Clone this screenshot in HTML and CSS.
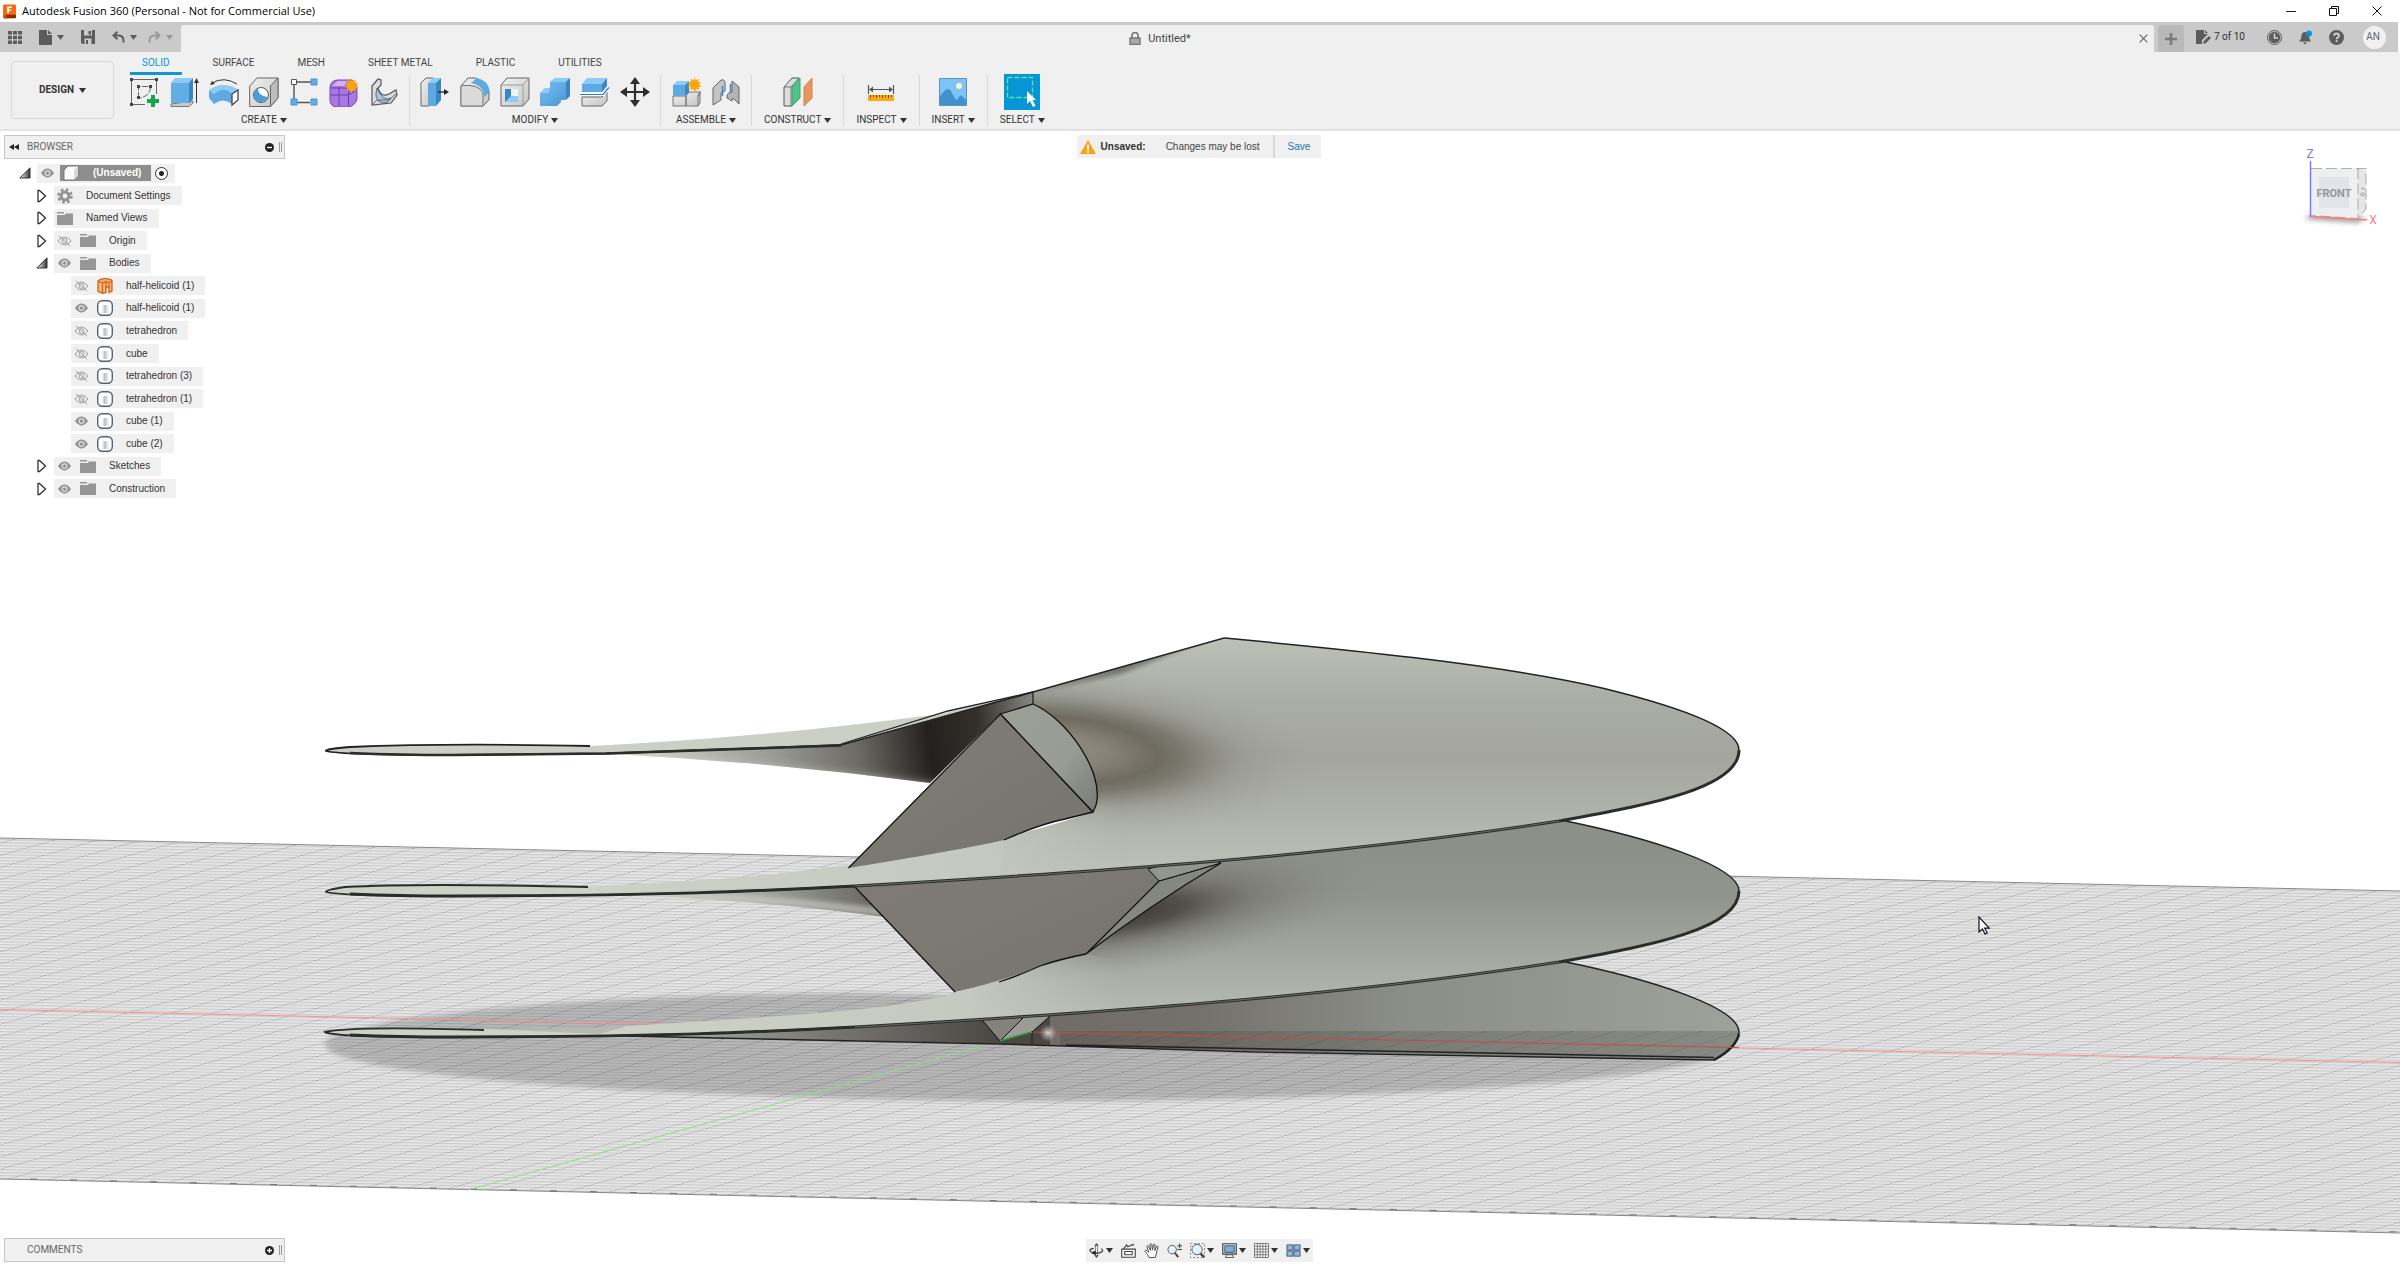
FILE: index.html
```html
<!DOCTYPE html>
<html lang="en">
<head>
<meta charset="utf-8">
<title>Autodesk Fusion 360 (Personal - Not for Commercial Use)</title>
<link rel="stylesheet" href="styles.css">
</head>
<body>
<svg class="defs" aria-hidden="true">
  <defs>
    <linearGradient id="gblue" x1="0" y1="0" x2="1" y2="1"><stop offset="0" stop-color="#7cc3f5"/><stop offset="1" stop-color="#4593cf"/></linearGradient>
    <linearGradient id="ggray" x1="0" y1="0" x2="1" y2="1"><stop offset="0" stop-color="#f2f2f2"/><stop offset="1" stop-color="#c4c4c4"/></linearGradient>
    <linearGradient id="gbody" x1="0" y1="0" x2="1" y2="0"><stop offset="0" stop-color="#fff"/><stop offset=".4" stop-color="#b9bdca"/><stop offset="1" stop-color="#fff"/></linearGradient>
    <linearGradient id="gtri" x1="0" y1="0" x2="1" y2="0"><stop offset="0" stop-color="#fff"/><stop offset="1" stop-color="#333"/></linearGradient>
    <symbol id="caret" viewBox="0 0 7 6"><path d="M0 1h7L3.5 6z" fill="currentColor"/></symbol>
    <symbol id="eye" viewBox="0 0 16 12"><path d="M1 6Q8-3.500 15 6Q8 15.500 1 6z" fill="#949494"/><circle cx="8" cy="6" r="3" fill="#f0f0f0"/><circle cx="8" cy="6" r="2" fill="#949494"/></symbol>
    <symbol id="eyeoff" viewBox="0 0 16 12"><g fill="none" stroke="#999"><path d="M1 6Q8-2.500 15 6Q8 14.500 1 6z"/><circle cx="8" cy="6" r="2.600"/><path d="M2 .5L14 11.500"/></g></symbol>
    <symbol id="folder" viewBox="0 0 16 13"><path d="M0 0h7v1.500H0zM0 3h7.500L9 1.500h7V13H0z" fill="#969696"/></symbol>
    <symbol id="closed" viewBox="0 0 10 14"><path d="M1 1.500h1.500L8.500 7l-6 5.500H1z" fill="#fff" stroke="#333" stroke-width="1.300"/></symbol>
    <symbol id="open" viewBox="0 0 12 12"><path d="M11 .8V11H.8z" fill="url(#gtri)" stroke="#333"/></symbol>
    <symbol id="body" viewBox="0 0 16 16"><rect x=".7" y=".7" width="14.600" height="14.600" rx="4.500" fill="#fff" stroke="#5a6070" stroke-width="1.400"/><path d="M5 5h7v8H5z" fill="url(#gbody)"/></symbol>
    <symbol id="surf" viewBox="0 0 16 16"><path d="M1 3q2-2 6-2.300Q13 .5 15 2.500V13l-3 1.500V9H9v5.500l-3 .8L1 13.500z" fill="#f9b27a" stroke="#cf6412" stroke-width="1.300"/><path d="M1.500 3.500L5.500 5v10M5.500 5L9 3.700V9M12 9V4.500L15 3M9 3.700l3 .8" fill="none" stroke="#cf6412" stroke-width="1.200"/></symbol>
    <symbol id="gear" viewBox="0 0 16 16"><circle cx="8" cy="8" r="6.300" fill="none" stroke="#949494" stroke-width="3" stroke-dasharray="2.600 2.348"/><circle cx="8" cy="8" r="3.900" fill="none" stroke="#949494" stroke-width="3"/></symbol>
    <symbol id="star" viewBox="0 0 16 16"><path d="M8 0l1.400 3.700L12.500 1.500l-.7 3.800 3.700.2-2.900 2.500L16 10l-3.800.6 1.300 3.500-3.400-1.700L8 16l-1.500-3.600-3.600 1.600 1-3.500L0 9.500 3.400 8 .7 5.200l3.700.1L4 1.500l3 2.200z" fill="#fca50a"/></symbol>
  </defs>
</svg>

<header class="titlebar">
  <svg class="logo" viewBox="0 0 14 15"><rect width="14" height="15" rx="1.500" fill="#f56b12"/><path d="M4.500 2h5v1.600H6.400v1.700H9v1.500H6.400V9.500H4.500z" fill="#fff"/><path d="M3 11h11v3.500H2z" fill="#8c2c00"/><path d="M1 11h3v4H1z" fill="#d04a00"/></svg>
  <h1>Autodesk Fusion 360 (Personal - Not for Commercial Use)</h1>
  <div class="window-buttons">
    <button aria-label="Minimize"><svg viewBox="0 0 10 10"><path d="M0 5.500h10" stroke="#222"/></svg></button>
    <button aria-label="Restore"><svg viewBox="0 0 10 10"><path d="M.5 2.500h7v7h-7zM2.500 2V.5h7v7H8" fill="none" stroke="#111"/></svg></button>
    <button aria-label="Close"><svg viewBox="0 0 10 10"><path d="M.5 .5l9 9M9.500 .5l-9 9" stroke="#111"/></svg></button>
  </div>
</header>

<div class="tabbar">
  <div class="quick">
    <button aria-label="Data panel"><svg width="14" height="13" viewBox="0 0 14 13" fill="#5c5c5c"><path d="M0 0h4v3.500H0zM5 0h4v3.500H5zM10 0h4v3.500h-4zM0 4.700h4v3.500H0zM5 4.700h4v3.500H5zM10 4.700h4v3.500h-4zM0 9.400h4v3.500H0zM5 9.400h4v3.500H5zM10 9.400h4v3.500h-4z"/></svg></button>
    <button aria-label="File"><svg width="13" height="15" viewBox="0 0 13 15"><path d="M0 0h8v5h5v10H0zM9 0l4 4H9z" fill="#5c5c5c"/></svg><svg class="caret"><use href="#caret"/></svg></button>
    <button aria-label="Save"><svg width="14" height="14" viewBox="0 0 14 14"><path d="M0 0h14v14H1.500L0 12.500z" fill="#5c5c5c"/><path d="M3 0h8v5.500H3zM3.500 8.500h7V14h-7z" fill="#cacaca"/><path d="M7.500 1H10v3.500H7.500zM5 10h2v4H5z" fill="#5c5c5c"/></svg></button>
    <div class="history">
      <button aria-label="Undo"><svg width="13" height="12" viewBox="0 0 13 12"><path d="M5.500 .8L1.500 4.500l4 3.700M2 4.500h5.500Q12 5 11.500 11.500" fill="none" stroke="#5c5c5c" stroke-width="2"/></svg><svg class="caret"><use href="#caret"/></svg></button>
      <button class="off" aria-label="Redo"><svg width="13" height="12" viewBox="0 0 13 12"><path d="M7.500 .8l4 3.700-4 3.700M11 4.500H5.500Q1 5 1.500 11.500" fill="none" stroke="#999" stroke-width="2"/></svg><svg class="caret"><use href="#caret"/></svg></button>
    </div>
  </div>
  <div class="doc-tab">
    <div class="doc-name"><svg width="12" height="13" viewBox="0 0 12 13"><path d="M3 6V3.500a3 3 0 0 1 6 0V6" fill="none" stroke="#777" stroke-width="1.700"/><path d="M1 6h10v6.500H1z" fill="#a9a9a9" stroke="#777" stroke-width="1.400"/></svg><span>Untitled*</span></div>
    <button aria-label="Close document"><svg width="9" height="9" viewBox="0 0 9 9"><path d="M.7 .7l7.600 7.600M8.300 .7L.7 8.300" stroke="#666" stroke-width="1.200"/></svg></button>
  </div>
  <button class="new-tab" aria-label="New document"><svg width="12" height="12" viewBox="0 0 12 12"><path d="M6 0v12M0 6h12" stroke="#7a7a7a" stroke-width="2.600"/></svg></button>
  <div class="account">
    <button class="count"><svg width="15" height="16" viewBox="0 0 15 16"><path d="M0 1h8v4h4l-6 6v4H0zM9 1l3 3H9z" fill="#5c5c5c"/><path d="M7 15l.8-3L13 7l2 2-5 5z" fill="#5c5c5c"/></svg><span>7 of 10</span></button>
    <button aria-label="Job status"><svg width="15" height="15" viewBox="0 0 15 15"><circle cx="7.500" cy="7.500" r="7" fill="#cacaca" stroke="#5c5c5c"/><circle cx="7.500" cy="7.500" r="5.700" fill="#5c5c5c"/><path d="M7.500 3.500v4.500H11" fill="none" stroke="#d5d5d5" stroke-width="1.500"/></svg></button>
    <button aria-label="Notifications"><svg width="15" height="15" viewBox="0 0 15 15"><path d="M1 11.500Q3.500 9 3.500 5.500 4 2 7 2q3.500 0 4 3.500Q11 9 13 11.500zM5 12.500h4Q7 16 5 12.500z" fill="#5c5c5c"/><circle cx="11" cy="3.500" r="3" fill="#0696d7"/></svg></button>
    <button aria-label="Help"><svg width="15" height="15" viewBox="0 0 15 15"><circle cx="7.500" cy="7.500" r="7.500" fill="#5c5c5c"/><path d="M5 5.700Q5.200 3.500 7.500 3.500T10 5.700Q10 6.800 8.500 7.600 7.600 8.100 7.600 9.200M7.600 10.300v1.700" fill="none" stroke="#d5d5d5" stroke-width="1.800"/></svg></button>
    <button class="avatar">AN</button>
  </div>
</div>

<div class="toolbar">
  <button class="workspace">DESIGN<svg class="caret"><use href="#caret"/></svg></button>
  <div class="ribbon">
    <nav class="tabs">
      <a href="#solid" class="on">SOLID</a><a href="#surface">SURFACE</a><a href="#mesh">MESH</a><a href="#sheet">SHEET METAL</a><a href="#plastic">PLASTIC</a><a href="#utilities">UTILITIES</a>
    </nav>
    <div class="groups">
      <section class="group multi">
        <div class="icons">
          <button aria-label="Create sketch"><svg viewBox="0 0 30 30"><path d="M2.500 2v26M27.500 2v15M3 2.500h25M2 27.500h14" fill="none" stroke="#666"/><path d="M1 1h3v3H1zM26 1h3v3h-3zM1 26h3v3H1z" fill="#444"/><path d="M9.500 21V9.500H22M21.500 10q0 9-11 11" fill="none" stroke="#666" stroke-dasharray="6 1.500"/><path d="M8 8h3v3H8zM20 8h3v3h-3zM8 19h3v3H8z" fill="#444"/><path d="M24 18v12M18 24h12" stroke="#16a54a" stroke-width="4"/></svg></button>
          <button aria-label="Extrude"><svg viewBox="0 0 30 30"><path d="M2 27v2.500h18L24 26v-2z" fill="#c9c9c9" stroke="#777"/><path d="M2 5.500L6 1h18l-4 4.500z" fill="#8bcbf8"/><path d="M2 5.500h18V26H2z" fill="#62ade6"/><path d="M20 5.500L24 1v21l-4 4.500z" fill="#3c86be"/><path d="M27.500 26V4" stroke="#333"/><path d="M25 6l2.500-5L30 6z" fill="#333"/></svg></button>
          <button aria-label="Revolve"><svg viewBox="0 0 30 30"><path d="M3 6Q15 -1 28 7" fill="none" stroke="#333"/><path d="M1 8l2-4 3 3z" fill="#333"/><path d="M0 13Q14 3 30 13L25 17Q14 9 5 17z" fill="#8bcbf8"/><path d="M0 13v8l5 6q9-7 18 0V16Q14 9 5 17z" fill="#5fa9e2"/><path d="M23 17l6-4v10l-6 5z" fill="#fff" stroke="#444" stroke-width="1.300"/></svg></button>
          <button aria-label="Hole"><svg viewBox="0 0 30 30"><path d="M.7 9L8 1h21v20l-7.500 8.500H.7z" fill="url(#ggray)" stroke="#666"/><path d="M21.500 9L29 1v20l-7.500 8.500z" fill="#bdbdbd" stroke="#666"/><circle cx="12" cy="18" r="7.500" fill="#fff" stroke="#555"/><path d="M9 11.500Q9 19 18.500 20A7 7 0 1 1 9 11.500z" fill="#4a9dd8"/></svg></button>
          <button aria-label="Pattern"><svg viewBox="0 0 30 30"><path d="M5 5h20M5 5v20M7 25.500h14" stroke="#555" stroke-width="1.400"/><path d="M2.500 2.500h5v5h-5z" fill="#fff" stroke="#555"/><path d="M22 2h6v6h-6zM2 22h6v6H2zM22 22h6v6h-6z" fill="#62ade6" stroke="#4593cf"/></svg></button>
          <button aria-label="Create form"><svg viewBox="0 0 30 30"><path d="M1 10Q2 3 9 3l14 0q5 3 5 10v9q-2 7-9 8H7q-6-1-6-7z" fill="#a878e0" stroke="#7a48b8"/><path d="M1.500 18H19l9-5M10 10v19M1.500 11h16q2 0 2 3v15M19 11l5-6" fill="none" stroke="#7038b0"/><path d="M3 9l6-5h9l-3 5z" fill="#d2b4f6"/><use href="#star" x="15" y="1" width="15" height="15"/></svg></button>
          <button aria-label="Derive"><svg viewBox="0 0 30 30"><path d="M3 28V9l6-7 3 1v5l-3 3q3 10 11 6l7-4 1 5-6 8z" fill="#ddd" stroke="#555" stroke-width="1.200"/><path d="M8 11Q4 24 14 26q6 0 8-5-8 4-14-10z" fill="#a9c3e0" stroke="#456" stroke-width=".8"/><path d="M3 28l5-5h12l8-7" fill="none" stroke="#666"/></svg></button>
        </div>
        <button class="label">CREATE<svg class="caret"><use href="#caret"/></svg></button>
      </section>
      <section class="group multi">
        <div class="icons">
          <button aria-label="Press pull"><svg viewBox="0 0 30 30"><path d="M1 6l5-5h7v22l-4 6H1z" fill="url(#ggray)" stroke="#666"/><path d="M8 6h8v23H8z" fill="#5fa9e2"/><path d="M8 6l5-5h8l-5 5z" fill="#8bcbf8"/><path d="M16 6l5-5v22l-5 6z" fill="#3c86be"/><path d="M18 15h8" stroke="#222" stroke-width="1.300"/><path d="M24 12l5 3-5 3z" fill="#222"/></svg></button>
          <button aria-label="Fillet"><svg viewBox="0 0 30 30"><path d="M1 9l7-8h8L29 15v8l-6 6H1z" fill="url(#ggray)" stroke="#666"/><path d="M11 6l6-5Q28 3 30 15l-6 5Q24 8 11 6z" fill="#5fa9e2"/><path d="M1 8.500h9Q24 10 23 20v9H1z" fill="#dadada" stroke="#777"/></svg></button>
          <button aria-label="Shell"><svg viewBox="0 0 30 30"><path d="M1 8l6-7h22v21l-6 7H1z" fill="url(#ggray)" stroke="#666"/><path d="M1 8h22v21M23 8l6-7" fill="none" stroke="#999"/><path d="M5 12h13v13H5z" fill="#3c86be"/><path d="M11 19h7v6H5z" fill="#8bcbf8"/><path d="M11 12h7v7h-7z" fill="#f2f2f2"/></svg></button>
          <button aria-label="Combine"><svg viewBox="0 0 30 30"><path d="M0 16l5-5h5V5l5-4h15v18l-5 4h-4v2l-4 4H0z" fill="url(#gblue)"/><path d="M0 16l5-5h5L9 15l-1 1zM10 5l5-4h15l-4 4z" fill="#8bcbf8"/><path d="M26 5l4-4v18l-4 4z" fill="#3c86be"/></svg></button>
          <button aria-label="Split body"><svg viewBox="0 0 30 30"><path d="M2 20h20l5-5v9l-5 5H2z" fill="url(#ggray)" stroke="#666"/><path d="M2 7l5-6h20l-5 6z" fill="#8bcbf8"/><path d="M2 7h20v8H2z" fill="#5fa9e2"/><path d="M22 7l5-6v8l-5 6z" fill="#3c86be"/><path d="M0 17.500h23l6-7" fill="none" stroke="#fff" stroke-width="3"/><path d="M0 17.500h23l6-7" fill="none" stroke="#1a7fd0" stroke-width="1.200"/></svg></button>
          <button aria-label="Move"><svg viewBox="0 0 30 30"><path d="M15 5v20M5 15h20" stroke="#2e2e2e" stroke-width="2.200"/><path d="M15 0l5 7H10zM15 30l5-7H10zM0 15l7-5v10zM30 15l-7-5v10z" fill="#2e2e2e"/></svg></button>
        </div>
        <button class="label">MODIFY<svg class="caret"><use href="#caret"/></svg></button>
      </section>
      <section class="group multi">
        <div class="icons">
          <button aria-label="New component"><svg viewBox="0 0 30 30"><path d="M2 19h13v10H2zM15 19l3-4h12l-3 4v10H15zM27 19l2-4v11l-2 3" fill="url(#ggray)" stroke="#777"/><path d="M2 8h12v11H2z" fill="#5fa9e2"/><path d="M2 8l4-4h12l-4 4z" fill="#8bcbf8"/><path d="M14 8l4-4v11l-4 4z" fill="#3c86be"/><use href="#star" x="16" y="0" width="15" height="15"/></svg></button>
          <button aria-label="Joint"><svg viewBox="0 0 30 30"><path d="M2 11L10 3q4-1 4 3v8l-4 2v7l-8 5z" fill="#c4c4c4" stroke="#666"/><path d="M28 10l-7-6v11h-2q-4 2-3 6l5 3 1-3 6 6z" fill="#b4b4b4" stroke="#666"/><path d="M11.500 9v10M19.500 7v9" stroke="#2a8ad4" stroke-width="1.500"/></svg></button>
        </div>
        <button class="label">ASSEMBLE<svg class="caret"><use href="#caret"/></svg></button>
      </section>
      <section class="group">
        <div class="icons"><button aria-label="Offset plane"><svg viewBox="0 0 30 30"><path d="M1 10l8-9h7v20l-7 8H1z" fill="#ddd" stroke="#555"/><path d="M1 10h7v19M8 10l8-9" fill="none" stroke="#777"/><path d="M9 10l8-9v20l-8 8z" fill="#52c184" stroke="#3ba86c"/><path d="M21 10l8-9v20l-8 8z" fill="#e8965f" stroke="#d5834c"/></svg></button></div>
        <button class="label">CONSTRUCT<svg class="caret"><use href="#caret"/></svg></button>
      </section>
      <section class="group">
        <div class="icons"><button aria-label="Measure"><svg viewBox="0 0 30 30"><path d="M2.500 8v9M27.500 8v9M4 12.500h22" stroke="#555" stroke-width="1.200"/><path d="M3 12.500l4-3v6zM27 12.500l-4-3v6z" fill="#555"/><path d="M2 18h26v6H2z" fill="#fba914"/><path d="M4.500 18v3M7.500 18v2M10.500 18v3M13.500 18v2M16.500 18v3M19.500 18v2M22.500 18v3M25.500 18v2" stroke="#744b00"/></svg></button></div>
        <button class="label">INSPECT<svg class="caret"><use href="#caret"/></svg></button>
      </section>
      <section class="group">
        <div class="icons"><button aria-label="Insert image"><svg viewBox="0 0 30 30"><path d="M1.500 1.500h27v27h-27z" fill="#7cc3f7" stroke="#5b94bd"/><circle cx="21" cy="9" r="3" fill="#fdf6c8"/><path d="M2 20q7-12 11-6 3 7 6 9 3-6 5-4l4 4v5H2z" fill="#3f93cc"/></svg></button></div>
        <button class="label">INSERT<svg class="caret"><use href="#caret"/></svg></button>
      </section>
      <section class="group">
        <div class="icons"><button class="picked" aria-label="Select"><svg viewBox="0 0 36 36"><path d="M3.500 3.500h25v20h-25z" fill="none" stroke="#5fe39a" stroke-width="1.300" stroke-dasharray="5 2"/><path d="M23 17v13l3-3 3 6 2.500-1.200-3-5.800H32z" fill="#fff"/></svg></button></div>
        <button class="label">SELECT<svg class="caret"><use href="#caret"/></svg></button>
      </section>
    </div>
  </div>
</div>

<main class="viewport">
  <svg class="scene" viewBox="0 131 2400 1135" preserveAspectRatio="xMidYMid slice" role="img" aria-label="Helicoid model">
    <defs>
      <pattern id="rows" width="40" height="3" patternUnits="userSpaceOnUse" patternTransform="matrix(1 .0221 0 1 0 838)"><rect width="40" height="3" fill="#e8e8e8"/><rect y="1" width="40" height="1.300" fill="#cbcbcb"/></pattern>
      <pattern id="cols" width="40" height="40" patternUnits="userSpaceOnUse" patternTransform="matrix(1 .0221 -3.576 1 16 838.400)"><rect width="3" height="40" fill="#000" opacity=".13"/></pattern>
      <linearGradient id="top" x1="0" y1="640" x2="0" y2="870" gradientUnits="userSpaceOnUse"><stop offset="0" stop-color="#bdc0b7"/><stop offset=".25" stop-color="#abaea6"/><stop offset=".5" stop-color="#a4a69e"/><stop offset=".75" stop-color="#afb2aa"/><stop offset="1" stop-color="#bcc0b7"/></linearGradient>
      <linearGradient id="mid" x1="0" y1="850" x2="0" y2="1010" gradientUnits="userSpaceOnUse"><stop offset="0" stop-color="#8d8f89"/><stop offset=".3" stop-color="#92958e"/><stop offset=".65" stop-color="#a3a79f"/><stop offset="1" stop-color="#b5bab1"/></linearGradient>
      <linearGradient id="low" x1="1060" y1="0" x2="1739" y2="0" gradientUnits="userSpaceOnUse"><stop offset="0" stop-color="#716d66"/><stop offset=".2" stop-color="#74716b"/><stop offset=".5" stop-color="#8b8d87"/><stop offset="1" stop-color="#9ea29a"/></linearGradient>
      <linearGradient id="wing" x1="600" y1="0" x2="1120" y2="0" gradientUnits="userSpaceOnUse"><stop offset="0" stop-color="#cdd1c8"/><stop offset=".7" stop-color="#c5c9c0"/><stop offset="1" stop-color="#c0c4bb" stop-opacity="0"/></linearGradient>
      <radialGradient id="ring" gradientUnits="userSpaceOnUse" cx="0" cy="0" r="1" gradientTransform="matrix(270 22 -20 82 1050 750)"><stop offset="0" stop-color="#938d7e"/><stop offset=".2" stop-color="#88847a"/><stop offset=".4" stop-color="#6f6b60"/><stop offset=".5" stop-color="#747167" stop-opacity=".85"/><stop offset=".72" stop-color="#8e8e85" stop-opacity=".4"/><stop offset="1" stop-color="#a2a49c" stop-opacity="0"/></radialGradient>
      <radialGradient id="dark" gradientUnits="userSpaceOnUse" cx="0" cy="0" r="1" gradientTransform="matrix(260 -34 -10 62 1120 914)"><stop offset="0" stop-color="#3b3733"/><stop offset=".25" stop-color="#4b4843" stop-opacity=".9"/><stop offset=".5" stop-color="#6a6862" stop-opacity=".55"/><stop offset="1" stop-color="#8c8e88" stop-opacity="0"/></radialGradient>
      <linearGradient id="under" x1="640" y1="740" x2="1030" y2="690" gradientUnits="userSpaceOnUse"><stop offset="0" stop-color="#cdd1c8"/><stop offset=".33" stop-color="#9a9b95"/><stop offset=".55" stop-color="#6b6964"/><stop offset=".73" stop-color="#23201d"/><stop offset=".86" stop-color="#34312d"/><stop offset="1" stop-color="#85847f"/></linearGradient>
      <linearGradient id="under2" x1="640" y1="0" x2="880" y2="0" gradientUnits="userSpaceOnUse"><stop offset="0" stop-color="#cdd1c8"/><stop offset=".5" stop-color="#a4a69f"/><stop offset="1" stop-color="#65635e"/></linearGradient>
      <linearGradient id="under3" x1="640" y1="0" x2="1000" y2="0" gradientUnits="userSpaceOnUse"><stop offset="0" stop-color="#b4b6af"/><stop offset=".5" stop-color="#7a7974"/><stop offset="1" stop-color="#4a4743"/></linearGradient>
      <linearGradient id="cube" x1="0" y1="0" x2="1" y2="1"><stop offset="0" stop-color="#7f7b74"/><stop offset=".45" stop-color="#7d7a73"/><stop offset=".6" stop-color="#787772"/><stop offset="1" stop-color="#79756f"/></linearGradient>
      <linearGradient id="facet" x1="0" y1="0" x2="1" y2="1"><stop offset="0" stop-color="#9b9f96"/><stop offset=".6" stop-color="#989c94"/><stop offset="1" stop-color="#777a73"/></linearGradient>
      <radialGradient id="ball"><stop offset="0" stop-color="#fff" stop-opacity=".75"/><stop offset=".6" stop-color="#ddd" stop-opacity=".3"/><stop offset="1" stop-color="#999" stop-opacity="0"/></radialGradient>
      <clipPath id="ctop"><path d="M1033 692L1224 638C1330 648 1500 664 1602 688C1680 707 1739 728 1739 750C1739 790 1640 806 1559 821C1340 855 1100 872 855 886L581 895L734 878Q960 858 1093 812C1104 790 1084 735 1033 704z"/></clipPath>
      <clipPath id="cunder"><path d="M610 754L841 746L1033 692V704L1000 714L930 783Q770 762 610 754z"/></clipPath>
      <filter id="soft" x="-10%" y="-30%" width="120%" height="160%"><feGaussianBlur stdDeviation="2.500"/></filter>
      <filter id="blur6" x="-20%" y="-50%" width="140%" height="200%"><feGaussianBlur stdDeviation="6"/></filter>
    </defs>

    <path d="M0 838L2400 891V1233L0 1179z" fill="url(#rows)"/>
    <path d="M0 838L2400 891V1233L0 1179z" fill="url(#cols)"/>
    <path d="M0 838L2400 891M0 1179L2400 1233" stroke="#888"/>
    <path d="M30 1179L2400 1232" stroke="#555" stroke-dasharray="7 33" opacity=".7"/>
    <path d="M325 1044C330 1020 560 994 861 993L1500 1010L1712 1060C1600 1086 1350 1101 1014 1101C640 1098 325 1075 325 1044z" opacity=".19" filter="url(#soft)"/>
    <path d="M0 1009.500L2400 1062.500" stroke="#fb8f8f"/>
    <path d="M1032 1032L468 1190" stroke="#86e086"/>

    <!-- lowest turn -->
    <path d="M1561 961C1650 979 1739 1007 1739 1032Q1738 1046 1714 1060L1255 1051L1000 1044L1000 1010z" fill="url(#low)"/>
    <path d="M620 1036L1050 1010V1045L1000 1043.500z" fill="url(#under3)"/>
    <path d="M1060 1031L1739 1031Q1738 1046 1714 1060L1255 1051L1060 1045z" fill="#494a42" opacity=".26"/>
    <path d="M1060 1031L1739 1031Q1738 1046 1714 1060L1255 1051L1060 1045z" fill="url(#cols)" opacity=".7"/>
    <path d="M1561 961C1650 979 1739 1007 1739 1032Q1738 1046 1714 1060L1255 1052L1000 1044L627 1036M1714 1057.500L1066 1045" fill="none" stroke="#222" stroke-width="1.500"/>
    <path d="M1739 1034Q1736 1048 1714 1060" fill="none" stroke="#222" stroke-width="2.500"/>
    <path d="M1033 1032L1739 1047.600" stroke="#c84b42"/>
    <path d="M983 1021L1000 1041L1022 1019V1010H983z" fill="#85827b" stroke="#111"/>
    <path d="M1000 1041L1032 1032L1049 1017V1010H1030L1022 1019z" fill="#9a9d95" stroke="#111"/>
    <path d="M1032 1032V1045" stroke="#222"/>
    <path d="M1000 1041L1032 1032" stroke="#2f9a2f" stroke-width="1.500"/>
    <circle cx="1048" cy="1033" r="9" fill="url(#ball)"/>

    <!-- middle turn -->
    <path d="M620 895Q760 900 885 917L860 884z" fill="url(#under2)"/>
    <path d="M620 896Q760 900 885 917L880 908Q760 892 620 893z" fill="#d5d8d0" opacity=".6" filter="url(#soft)"/>
    <path d="M1200 840L1561 820C1650 838 1739 866 1739 891C1739 931 1640 947 1559 962C1340 996 1100 1013 855 1027C760 1032 660 1037 453 1037Q330 1037 325 1032Q330 1027 484 1029Q560 1029 627 1026C760 1017 890 1012 955 993Q1000 982 1040 966Q1060 959 1086 954z" fill="url(#mid)"/>
    <path d="M1200 840L1561 820C1650 838 1739 866 1739 891C1739 931 1640 947 1559 962C1340 996 1100 1013 855 1027C760 1032 660 1037 453 1037Q330 1037 325 1032Q330 1027 484 1029Q560 1029 627 1026C760 1017 890 1012 955 993Q1000 982 1040 966Q1060 959 1086 954z" fill="url(#dark)"/>
    <path d="M600 1034L627 1026C760 1017 890 1012 955 993Q1000 982 1040 966L1086 954L1140 965L1120 1009L855 1027Q700 1035 453 1037Q330 1037 325 1032Q330 1027 484 1029z" fill="url(#wing)"/>
    <path d="M484 1030Q350 1026 325 1032Q330 1037 453 1037C660 1037 760 1032 855 1027" fill="none" stroke="#2a2c28" stroke-width="1.800"/>
    <path d="M1561 820C1650 838 1739 866 1739 891" fill="none" stroke="#222" stroke-width="1.500"/>
    <path d="M1739 891C1739 931 1640 947 1559 962C1340 996 1100 1013 855 1027C760 1032 660 1037 453 1037Q400 1037 350 1035" fill="none" stroke="#2b2d29" stroke-width="3"/>
    <path d="M1559 962C1340 996 1100 1013 855 1027" fill="none" stroke="#777a74" stroke-width=".8"/>
    <path d="M854 886L955 992Q1000 982 1040 966Q1060 959 1086 954L1159 881L1148 860z" fill="url(#cube)"/>
    <path d="M854 886L955 992M999 982Q1020 975 1040 966Q1060 959 1086 954" fill="none" stroke="#111" stroke-width="1.300"/>
    <path d="M1086 954L1159 881L1221 863Q1150 905 1086 954z" fill="#858781" stroke="#111" stroke-width="1.300"/>
    <path d="M1148 869L1159 881L1221 863L1200 855z" fill="#93968f" stroke="#111"/>

    <!-- upper turn -->
    <g clip-path="url(#ctop)">
      <path d="M560 630h1190v270H560z" fill="url(#top)"/>
      <path d="M780 640h560v220H780z" fill="url(#ring)"/>
      <path d="M1033 692L1200 642L1120 674z" fill="#6d706a" filter="url(#soft)"/>
      <path d="M560 900V850L900 840Q1050 830 1110 800L1160 870z" fill="url(#wing)" filter="url(#blur6)"/>
    </g>
    <path d="M586 887Q700 880 734 878Q960 858 1004 840L1000 878L855 886L453 896Q330 896 325 891Q330 885 473 885z" fill="url(#wing)"/>
    <path d="M588 887Q420 883 345 887Q325 890 326 892Q340 896 453 896C660 896 760 891 855 886" fill="none" stroke="#2a2c28" stroke-width="1.800"/>
    <path d="M1739 750C1739 790 1640 806 1559 821C1340 855 1100 872 855 886C760 891 660 896 453 896Q400 896 350 894" fill="none" stroke="#2b2d29" stroke-width="3"/>
    <path d="M1559 821C1340 855 1100 872 855 886" fill="none" stroke="#777a74" stroke-width=".8"/>
    <path d="M1033 692L1224 638C1330 648 1500 664 1602 688C1680 707 1739 728 1739 750" fill="none" stroke="#222" stroke-width="1.500"/>

    <!-- top left wing -->
    <path d="M590 746Q760 738 940 714L1033 692L841 745L606 754L453 755Q330 755 325 750Q335 745 402 745z" fill="#cbcfc6"/>
    <g clip-path="url(#cunder)">
      <path d="M600 690h440v100H600z" fill="url(#under)"/>
      <path d="M600 756Q770 765 960 790V800H600z" fill="#d5d8d0" filter="url(#blur6)"/>
    </g>
    <path d="M590 746Q450 743 350 747Q325 749 326 751Q340 755 453 755L606 753.500L841 745L1033 692" fill="none" stroke="#222" stroke-width="1.800"/>
    <path d="M350 753Q400 755 453 755L606 753.500L841 745.500" fill="none" stroke="#2b2d29" stroke-width="2.600"/>
    <path d="M841 744L948 711L1033 692" fill="none" stroke="#222" stroke-width="1.300"/>
    <path d="M1000.500 714L848.500 868Q960 850 1004 840Q1040 824 1065 819L1093 812z" fill="url(#cube)"/>
    <path d="M1093 812L1000.500 714L848.500 868M1004 840Q1040 824 1065 819L1093 812" fill="none" stroke="#111" stroke-width="1.300"/>
    <path d="M1000.500 714L1033 704C1066 718 1105 772 1096 805L1093 812z" fill="url(#facet)" stroke="#111" stroke-width="1.300"/>
    <path d="M1033 692V704" stroke="#222" stroke-width="1.300"/>
    <path d="M1979 917v15l3.500-3 2.500 5 2.200-1-2.500-4.800h4.500z" fill="#fff" stroke="#112" stroke-width="1.200"/>
  </svg>

  <div class="top-row">
    <aside class="browser">
      <div class="panel-head"><svg class="collapse" width="10" height="6" viewBox="0 0 10 6"><path d="M5 0v6L0 3zM10 0v6L5 3z" fill="#222"/></svg><h2>BROWSER</h2><button aria-label="Collapse all"><svg width="9" height="9" viewBox="0 0 9 9"><circle cx="4.500" cy="4.500" r="4.500" fill="#222"/><path d="M2 4.500h5" stroke="#fff" stroke-width="1.400"/></svg></button><i class="grip"></i></div>
      <ul class="tree">
        <li class="l1"><svg class="tog"><use href="#open"/></svg><div class="chip"><svg class="eye"><use href="#eye"/></svg><strong><svg class="ico" viewBox="0 0 16 16"><path d="M1 5l4-4h10v10l-4 4H1z" fill="#fff" stroke="#777"/><path d="M11 5l4-4v10l-4 4z" fill="#d8d8d8"/></svg>(Unsaved)</strong><input type="radio" checked aria-label="Activate component"></div></li>
        <li class="l2"><svg class="tog"><use href="#closed"/></svg><div class="chip"><svg class="ico"><use href="#gear"/></svg><span>Document Settings</span></div></li>
        <li class="l2"><svg class="tog"><use href="#closed"/></svg><div class="chip"><svg class="ico fold"><use href="#folder"/></svg><span>Named Views</span></div></li>
        <li class="l2"><svg class="tog"><use href="#closed"/></svg><div class="chip"><svg class="eye"><use href="#eyeoff"/></svg><svg class="ico fold"><use href="#folder"/></svg><span>Origin</span></div></li>
        <li class="l2"><svg class="tog"><use href="#open"/></svg><div class="chip"><svg class="eye"><use href="#eye"/></svg><svg class="ico fold"><use href="#folder"/></svg><span>Bodies</span></div></li>
        <li class="l3"><div class="chip"><svg class="eye"><use href="#eyeoff"/></svg><svg class="ico"><use href="#surf"/></svg><span>half-helicoid (1)</span></div></li>
        <li class="l3"><div class="chip"><svg class="eye"><use href="#eye"/></svg><svg class="ico"><use href="#body"/></svg><span>half-helicoid (1)</span></div></li>
        <li class="l3"><div class="chip"><svg class="eye"><use href="#eyeoff"/></svg><svg class="ico"><use href="#body"/></svg><span>tetrahedron</span></div></li>
        <li class="l3"><div class="chip"><svg class="eye"><use href="#eyeoff"/></svg><svg class="ico"><use href="#body"/></svg><span>cube</span></div></li>
        <li class="l3"><div class="chip"><svg class="eye"><use href="#eyeoff"/></svg><svg class="ico"><use href="#body"/></svg><span>tetrahedron (3)</span></div></li>
        <li class="l3"><div class="chip"><svg class="eye"><use href="#eyeoff"/></svg><svg class="ico"><use href="#body"/></svg><span>tetrahedron (1)</span></div></li>
        <li class="l3"><div class="chip"><svg class="eye"><use href="#eye"/></svg><svg class="ico"><use href="#body"/></svg><span>cube (1)</span></div></li>
        <li class="l3"><div class="chip"><svg class="eye"><use href="#eye"/></svg><svg class="ico"><use href="#body"/></svg><span>cube (2)</span></div></li>
        <li class="l2"><svg class="tog"><use href="#closed"/></svg><div class="chip"><svg class="eye"><use href="#eye"/></svg><svg class="ico fold"><use href="#folder"/></svg><span>Sketches</span></div></li>
        <li class="l2"><svg class="tog"><use href="#closed"/></svg><div class="chip"><svg class="eye"><use href="#eye"/></svg><svg class="ico fold"><use href="#folder"/></svg><span>Construction</span></div></li>
      </ul>
    </aside>
    <div class="notice"><svg width="16" height="14" viewBox="0 0 16 14"><path d="M8 0l8 14H0z" fill="#faa21b"/><path d="M8 4.500V9.500M8 10.500v2" stroke="#fff" stroke-width="1.800"/></svg><b>Unsaved:</b><span>Changes may be lost</span><a href="#save">Save</a></div>
    <svg class="viewcube" width="90" height="90" viewBox="2300 145 90 90" role="img" aria-label="View cube">
      <defs><filter id="vs" x="-30%" y="-100%" width="160%" height="300%"><feGaussianBlur stdDeviation="2.500"/></filter></defs>
      <path d="M2304 219L2314 213L2366 217L2358 223z" fill="#777" opacity=".7" filter="url(#vs)"/>
      <path d="M2311 168.500H2358V219L2311 216z" fill="#eeeff0"/><path d="M2358 168.500L2366 170V209L2358 219z" fill="#e6e6e6"/>
      <path d="M2319 177h30v31h-30z" fill="#e1e4e8"/>
      <path d="M2311 168.500H2366V209L2358 218.500L2311 215.500M2358 168.500V218" fill="none" stroke="#999" stroke-width=".8" stroke-dasharray="11 4"/>
      <path d="M2310.500 161V217" stroke="#7a7aff" stroke-width="1.500"/><path d="M2311 216.500L2367 220" stroke="#ff7a7a" stroke-width="1.500"/>
      <path d="M2361 189q4-2 3 1M2360 195q3-4 4-1t-3 1" fill="none" stroke="#999"/>
      <text x="2334" y="197" class="face">FRONT</text><text x="2310" y="158" class="z">Z</text><text x="2373" y="224" class="x">X</text>
    </svg>
  </div>

  <div class="bottom-row">
    <div class="panel-head comments"><h2>COMMENTS</h2><button aria-label="Add comment"><svg width="9" height="9" viewBox="0 0 9 9"><circle cx="4.500" cy="4.500" r="4.500" fill="#222"/><path d="M2 4.500h5M4.500 2v5" stroke="#fff" stroke-width="1.300"/></svg></button><i class="grip"></i></div>
    <div class="navbar">
      <button aria-label="Orbit"><svg viewBox="0 0 16 16"><path d="M8 2v12" stroke="#555" stroke-width="2.500"/><path d="M8 2v12" stroke="#fff"/><path d="M8 0l2.500 3h-5zM8 16l2.500-3h-5z" fill="#555"/><path d="M13 6q4 3-2 4.500-6 1-9-1Q-1 6.500 5 5.700" fill="none" stroke="#333" stroke-width="1.200"/><path d="M2 10.500L7 8v5z" fill="#222"/></svg><svg class="caret"><use href="#caret"/></svg></button>
      <button aria-label="Look at"><svg viewBox="0 0 16 16"><path d="M.8 6.500h14.400v8.700H.8zM4 9h8v3.500H4zM3 6l3-4 1 2 6-2.500V3" fill="#fff" stroke="#444" stroke-width="1.200"/></svg></button>
      <button aria-label="Pan"><svg viewBox="0 0 16 16"><path d="M5.500 15.500Q4 12 1 9q0-2 2-1l2 2L3 3.500q1-1.500 2 0L7 8 6.300 1.500q1.200-1.500 2 0L9 7.500l1.200-6q1.500-.8 1.500.8L11.500 8l2-4.500q1.700-.5 1.500 1-1.500 4-1.800 7l-1.200 4z" fill="#fff" stroke="#444"/></svg></button>
      <button aria-label="Zoom"><svg viewBox="0 0 16 16"><path d="M8 10l4 5" stroke="#444" stroke-width="2"/><circle cx="5.500" cy="7" r="4.500" fill="#dff3fa" stroke="#555"/><path d="M11 3h5M13.500 .5v5M11 7h5" stroke="#333"/></svg></button>
      <button aria-label="Fit"><svg viewBox="0 0 16 16"><path d="M.5 .5h15v15H.5z" fill="none" stroke="#777" stroke-dasharray="2 2"/><path d="M11 11l4 4" stroke="#444" stroke-width="2.500"/><circle cx="7.500" cy="7" r="5.500" fill="#dff3fa" stroke="#555"/></svg><svg class="caret"><use href="#caret"/></svg></button>
      <button aria-label="Display settings"><svg viewBox="0 0 16 16"><path d="M.8 .8h14.400v11H.8z" fill="#ddd" stroke="#444" stroke-width="1.200"/><path d="M3 3h10v7H3z" fill="#7fabe0" stroke="#456"/><path d="M5 12.500h6l1.500 3h-9z" fill="#eee" stroke="#555"/></svg><svg class="caret"><use href="#caret"/></svg></button>
      <button aria-label="Grid and snaps"><svg viewBox="0 0 16 16"><path d="M.5 .5h15v15H.5zM3.500 0v16M6.500 0v16M9.500 0v16M12.500 0v16M0 3.500h16M0 6.500h16M0 9.500h16M0 12.500h16" fill="#fff" stroke="#777"/></svg><svg class="caret"><use href="#caret"/></svg></button>
      <button aria-label="Viewports"><svg viewBox="0 0 16 16"><path d="M1 2h6.500v5.500H1zM8.500 2H15v5.500H8.500zM1 8.500h6.500V14H1zM8.500 8.500H15V14H8.500z" fill="#8db6e8" stroke="#456"/></svg><svg class="caret"><use href="#caret"/></svg></button>
    </div>
  </div>
</main>
</body>
</html>
```
FILE: styles.css
```css
* { box-sizing: border-box; }
body { margin: 0; min-height: 100vh; display: flex; flex-direction: column; background: #fff; color: #333; font: 10px/12px "Liberation Sans", Arial, sans-serif; }
button { margin: 0; padding: 0; border: 0; background: none; color: inherit; font: inherit; display: flex; align-items: center; justify-content: center; }
svg { display: block; flex: none; }
h1, h2, ul { margin: 0; padding: 0; font-weight: normal; list-style: none; }
a { color: inherit; text-decoration: none; }
.defs { position: absolute; width: 0; height: 0; }
.caret { width: 7px; height: 6px; }

.titlebar { height: 22px; display: flex; align-items: center; padding: 0 18px 0 3px; }
.logo { width: 13px; height: 15px; margin-right: 6px; }
.titlebar h1 { flex: 1; color: #000; font: 11px/16px "Open Sans", "Noto Sans", sans-serif; }
.window-buttons { display: flex; gap: 33px; }
.window-buttons svg { width: 10px; height: 10px; }

.tabbar { height: 30px; display: flex; background: #cacaca; padding-right: 12px; margin-right: 2px; font-family: Roboto, sans-serif; color: #5c5c5c; }
.quick { width: 181px; padding: 0 7px 0 8px; display: flex; align-items: center; gap: 17px; }
.quick button { gap: 5px; }
.history { display: flex; gap: 11px; }
.off { color: #999; }
.doc-tab { flex: 1; margin-top: 3px; padding-right: 6px; display: flex; align-items: center; background: #f0f0f0; border-radius: 3px 3px 0 0; }
.doc-name { flex: 1; display: flex; justify-content: center; align-items: center; gap: 7px; color: #444; font-size: 11px; }
.new-tab { width: 26px; margin: 3px 12px 0 4px; background: #b9b9b9; border-radius: 3px 3px 0 0; }
.account { display: flex; align-items: center; gap: 16px; }
.count { gap: 3px; color: #333; margin-right: 6px; }
.avatar { width: 23px; height: 23px; margin-left: 3px; padding-right: 3px; border-radius: 50%; background: #f0f0f0; color: #5b6770; }

.toolbar { height: 79px; display: flex; background: #f0f0f0; border-bottom: 2px solid #e2e2e2; font-family: Roboto, sans-serif; color: #333; }
.workspace { width: 103px; height: 58px; margin: 9px 5px 0 11px; gap: 5px; border: 1px solid #d8d8d8; border-radius: 4px; font-weight: 700; }
.tabs { height: 23px; margin-left: 11px; display: flex; gap: 19px; color: #444; }
.tabs a { padding: 5px 12px 0; }
.tabs .on { color: #0696d7; border-bottom: 3px solid #0e96d8; }
.groups { display: flex; }
.group { height: 51px; padding: 0 12px; display: flex; flex-direction: column; align-items: center; gap: 5px; border-right: 1px solid #d8d8d8; }
.group:last-child { border: 0; }
.multi { padding: 0 5px; }
.icons { height: 34px; display: flex; align-items: center; }
.icons button { width: 36px; height: 34px; }
.multi .icons button { width: 40px; }
.icons svg { width: 30px; height: 30px; }
.icons .picked { height: 36px; background: #0696d7; }
.picked svg { width: 36px; height: 36px; }
.label { height: 12px; gap: 3px; white-space: nowrap; }

.viewport { position: relative; flex: 1; display: flex; flex-direction: column; justify-content: space-between; padding: 4px 10px 4px 4px; overflow: hidden; }
.scene { position: absolute; inset: 0; width: 100%; height: 100%; }
.top-row, .bottom-row { position: relative; display: grid; grid-template-columns: 1fr auto 1fr; align-items: start; }
.panel-head { width: 281px; height: 24px; padding: 0 2px 0 4px; display: flex; align-items: center; background: #f0f0f0; border: 1px solid #c6c6c6; }
.panel-head h2 { flex: 1; margin-left: 8px; color: #666; font: 10px/12px Roboto, sans-serif; }
.panel-head.comments h2 { margin-left: 18px; }
.grip { width: 3px; height: 10px; margin-left: 5px; border: solid #999; border-width: 0 1px; }

.tree { height: 338px; margin-top: 3px; display: grid; grid-auto-rows: 1fr; }
.tree li { display: flex; align-items: center; }
.l1 { padding-left: 15px; }
.l2 { padding-left: 32px; }
.l3 { padding-left: 67px; }
.tog { width: 12px; height: 14px; margin-right: 6px; }
.chip { height: 19px; padding: 0 11px 0 3px; display: flex; align-items: center; background: #f0f0f0; white-space: nowrap; }
.l1 .chip { padding-right: 7px; }
.eye { width: 15px; height: 12px; margin-right: 8px; }
.ico { width: 16px; height: 16px; margin-right: 13px; }
.fold { height: 13px; }
.chip strong { height: 16px; padding: 0 10px 0 3px; display: flex; align-items: center; background: #8e8e8e; color: #fff; }
.l1 .eye { margin-right: 5px; }
.l1 .ico { margin-right: 14px; }
.chip input { appearance: none; width: 13px; height: 13px; margin: 0 0 0 4px; border: 1px solid #333; border-radius: 50%; background: radial-gradient(circle, #222 0 2px, #fff 3px); }

.notice { height: 23px; padding: 0 11px 0 3px; display: flex; align-items: center; background: #f0f0f0; color: #444; white-space: nowrap; transform: none; }
.top-row .notice { margin-left: 4px; }
.notice b { margin: 0 20px 0 5px; color: #333; }
.notice a { height: 23px; margin-left: 13px; padding-left: 13px; border-left: 2px solid #d8d8d8; color: #1a75b5; line-height: 23px; }
.viewcube { justify-self: end; margin-top: 10px; }
.face { font: 700 11px Roboto, sans-serif; text-anchor: middle; fill: #92979c; }
.z, .x { font: 12px Roboto, sans-serif; text-anchor: middle; fill: #7a7aff; }
.x { fill: #ff7a7a; }

.bottom-row { align-items: center; }
.navbar { height: 23px; margin-left: 4px; padding: 0 3px; display: flex; align-items: center; gap: 8px; background: #f0f0f0; }
.navbar button { gap: 2px; }
.navbar svg:first-child { width: 15px; height: 15px; }
```
